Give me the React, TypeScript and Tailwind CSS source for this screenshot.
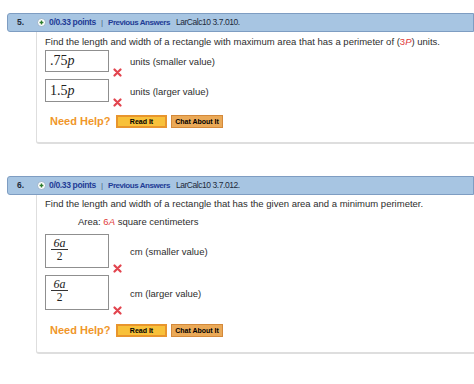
import React from "react";

const sans = { fontFamily: '"Liberation Sans", Arial, sans-serif' };
const serif = { fontFamily: '"Liberation Serif", "Times New Roman", serif' };

const RedX = () => (
  <svg width="9" height="9" viewBox="0 0 9 9">
    <path d="M1.5 1.5 L7.5 7.5 M7.5 1.5 L1.5 7.5" stroke="#e2444e" strokeWidth="2.2" strokeLinecap="round" />
  </svg>
);

const PlusIcon = () => (
  <svg width="9" height="9" viewBox="0 0 9 9">
    <circle cx="4.5" cy="4.5" r="4" fill="#ffffff" stroke="#8ea6c0" strokeWidth="0.8" />
    <path d="M4.5 2.6 V6.4 M2.6 4.5 H6.4" stroke="#2e7d2e" strokeWidth="1.4" />
  </svg>
);

function Header({ num, code }: { num: string; code: string }) {
  return (
    <div className="h-[19px] flex items-center bg-[#a7c5e2] border border-[#7e9dc2] rounded-l-[3px] text-[8px] leading-none" style={sans}>
      <span className="w-[29px] pl-[9px] font-bold text-[#1e2a3a] text-[8.5px]">{num}</span>
      <PlusIcon />
      <span className="ml-[3px] font-bold text-[#1f3c96] text-[8.5px] tracking-[-0.35px]">0/0.33 points</span>
      <span className="ml-[5px] text-[#4a5f80]">|</span>
      <span className="ml-[5px] font-bold text-[#1f3c96] tracking-[-0.45px]">Previous Answers</span>
      <span className="ml-[6px] text-[#1e2a3a] text-[8.5px] tracking-[-0.45px]">{code}</span>
    </div>
  );
}

function Row({ box, boxH, label, gapTop }: { box: React.ReactNode; boxH: number; label: string; gapTop: string }) {
  return (
    <div className={`flex items-center ${gapTop}`}>
      <div className="relative">
        <div className="w-[64px] border border-[#8f8f8f] bg-white" style={{ height: boxH }}>
          {box}
        </div>
        <div className="absolute left-[68px]" style={{ top: boxH - 4 }}>
          <RedX />
        </div>
      </div>
      <span className="ml-[21px] mt-[2px] text-[9.5px] text-[#2d2d2d] leading-none">{label}</span>
    </div>
  );
}

const Frac = () => (
  <div className="pl-[5px] pt-[3px] flex flex-col items-start" style={serif}>
    <div className="w-[17px] flex flex-col items-center text-[#222]">
      <span className="text-[12px] leading-[10px] italic">6a</span>
      <div className="w-[17px] h-px bg-[#333] mt-px" />
      <span className="text-[11.5px] leading-[13px]">2</span>
    </div>
  </div>
);

function Help({ mt }: { mt: string }) {
  return (
    <div className={`flex items-center ${mt}`}>
      <span className="ml-[5px] w-[66px] text-[11px] font-bold text-[#f0962a] leading-none">Need Help?</span>
      <div className="w-[51px] h-[13px] flex items-center justify-center border-2 border-[#e8952d] bg-[#f8c13a] text-[7px] font-bold text-black leading-none">
        Read It
      </div>
      <div className="ml-[4px] w-[52px] h-[13px] flex items-center justify-center border border-[#d4893a] bg-[#eaa957] text-[7px] font-bold text-black leading-none">
        Chat About It
      </div>
    </div>
  );
}

export default function App() {
  return (
    <div className="w-[474px] h-[384px] bg-white overflow-hidden" style={sans}>
      <div className="pt-[13px] pl-[7px]">
        <Header num="5." code="LarCalc10 3.7.010." />
        <div className="ml-[29px] border-l border-b-2 border-[#dedede] rounded-bl-[3px] pl-[8px] pt-[4px] pb-[14px]">
          <div className="text-[9.5px] leading-[12px] text-[#2d2d2d]">
            Find the length and width of a rectangle with maximum area that has a perimeter of (
            <span className="text-[#e03a3a]">3</span>
            <span className="text-[#e03a3a] italic">P</span>) units.
          </div>
          <div className="mt-[2px]">
            <Row
              gapTop=""
              boxH={22}
              label="units (smaller value)"
              box={
                <div className="pl-[4px] text-[14px] leading-[20px] text-[#222]" style={serif}>
                  .75<span className="italic">p</span>
                </div>
              }
            />
            <Row
              gapTop="mt-[7px]"
              boxH={23}
              label="units (larger value)"
              box={
                <div className="pl-[4px] text-[14px] leading-[21px] text-[#222]" style={serif}>
                  1.5<span className="italic">p</span>
                </div>
              }
            />
          </div>
          <Help mt="mt-[13px]" />
        </div>

        <div className="mt-[32px]">
          <Header num="6." code="LarCalc10 3.7.012." />
        </div>
        <div className="ml-[29px] border-l border-b-2 border-[#dedede] rounded-bl-[3px] pl-[8px] pt-[3px] pb-[15px]">
          <div className="text-[9.5px] leading-[12px] text-[#2d2d2d]">
            Find the length and width of a rectangle that has the given area and a minimum perimeter.
          </div>
          <div className="mt-[6px] pl-[33px] text-[9.5px] leading-[12px] text-[#2d2d2d]">
            Area: <span className="text-[#e03a3a]">6</span>
            <span className="text-[#e03a3a] italic">A</span> square centimeters
          </div>
          <div className="mt-[6px]">
            <Row gapTop="" boxH={34} label="cm (smaller value)" box={<Frac />} />
            <Row gapTop="mt-[7px]" boxH={35} label="cm (larger value)" box={<Frac />} />
          </div>
          <Help mt="mt-[14px]" />
        </div>
      </div>
    </div>
  );
}
